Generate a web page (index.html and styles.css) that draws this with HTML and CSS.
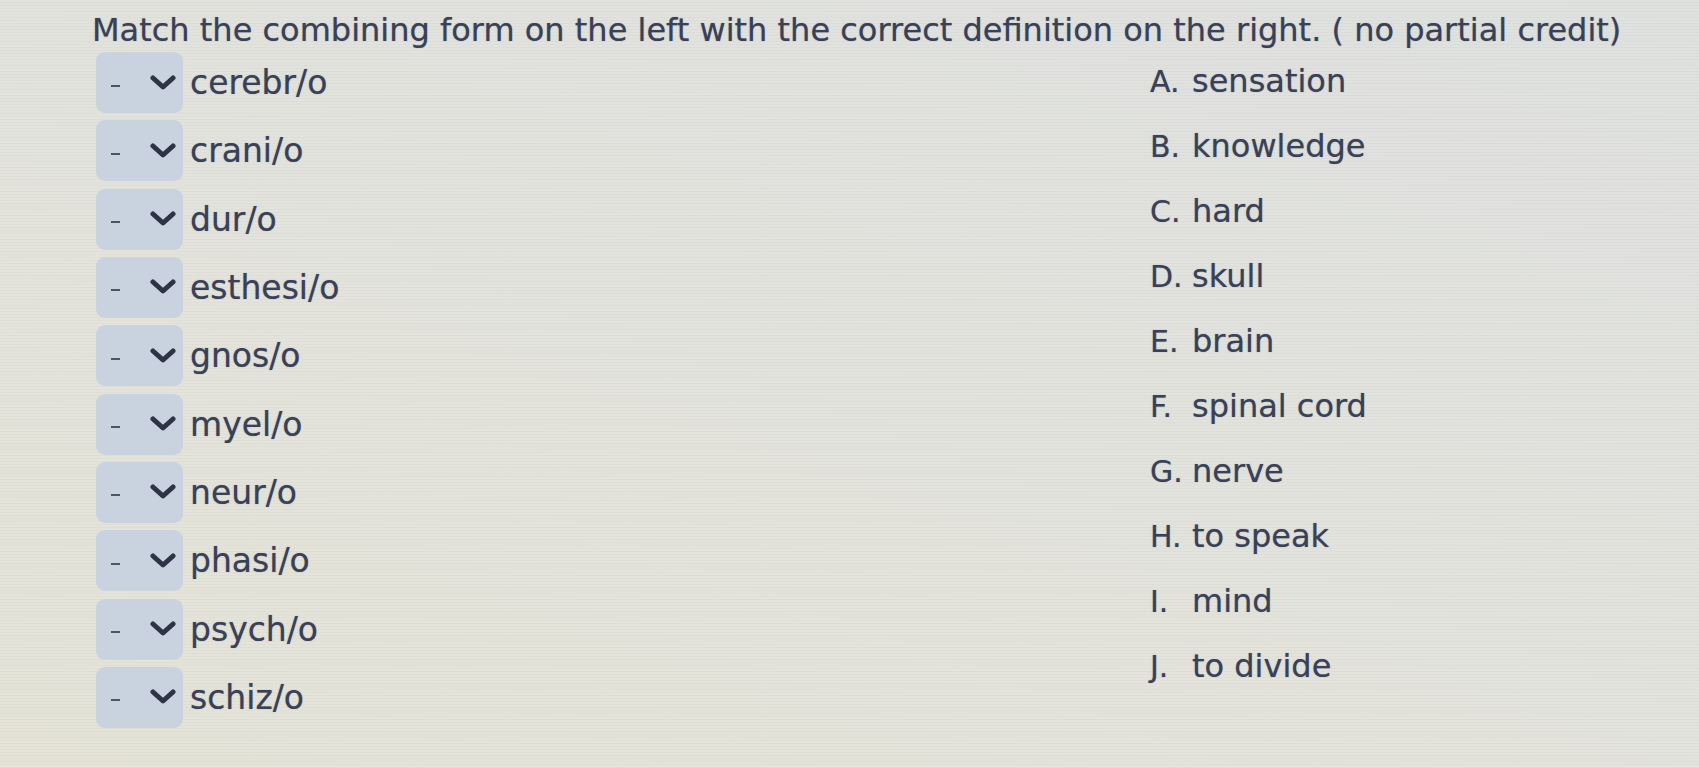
FILE: index.html
```html
<!DOCTYPE html>
<html lang="en">
<head>
<meta charset="UTF-8" />
<meta name="viewport" content="width=device-width, initial-scale=1" />
<title>Matching - Combining Forms</title>
<link rel="stylesheet" href="styles.css">
</head>
<body>
  <div class="question">
    <h1 class="prompt">Match the combining form on the left with the correct definition on the right. ( no partial credit)</h1>

    <div class="match">
      <!-- combining forms, each with its answer picker -->
      <ul class="terms">
        <li class="term"><div class="picker"><span class="dash"></span><svg class="chev" viewBox="0 0 26 16"><polyline points="3,3 13,12 23,3" /></svg></div><span class="word">cerebr/o</span></li>
        <li class="term"><div class="picker"><span class="dash"></span><svg class="chev" viewBox="0 0 26 16"><polyline points="3,3 13,12 23,3" /></svg></div><span class="word">crani/o</span></li>
        <li class="term"><div class="picker"><span class="dash"></span><svg class="chev" viewBox="0 0 26 16"><polyline points="3,3 13,12 23,3" /></svg></div><span class="word">dur/o</span></li>
        <li class="term"><div class="picker"><span class="dash"></span><svg class="chev" viewBox="0 0 26 16"><polyline points="3,3 13,12 23,3" /></svg></div><span class="word">esthesi/o</span></li>
        <li class="term"><div class="picker"><span class="dash"></span><svg class="chev" viewBox="0 0 26 16"><polyline points="3,3 13,12 23,3" /></svg></div><span class="word">gnos/o</span></li>
        <li class="term"><div class="picker"><span class="dash"></span><svg class="chev" viewBox="0 0 26 16"><polyline points="3,3 13,12 23,3" /></svg></div><span class="word">myel/o</span></li>
        <li class="term"><div class="picker"><span class="dash"></span><svg class="chev" viewBox="0 0 26 16"><polyline points="3,3 13,12 23,3" /></svg></div><span class="word">neur/o</span></li>
        <li class="term"><div class="picker"><span class="dash"></span><svg class="chev" viewBox="0 0 26 16"><polyline points="3,3 13,12 23,3" /></svg></div><span class="word">phasi/o</span></li>
        <li class="term"><div class="picker"><span class="dash"></span><svg class="chev" viewBox="0 0 26 16"><polyline points="3,3 13,12 23,3" /></svg></div><span class="word">psych/o</span></li>
        <li class="term"><div class="picker"><span class="dash"></span><svg class="chev" viewBox="0 0 26 16"><polyline points="3,3 13,12 23,3" /></svg></div><span class="word">schiz/o</span></li>
      </ul>

      <!-- definitions -->
      <ol class="defs">
        <li><span class="letter">A.</span>sensation</li>
        <li><span class="letter">B.</span>knowledge</li>
        <li><span class="letter">C.</span>hard</li>
        <li><span class="letter">D.</span>skull</li>
        <li><span class="letter">E.</span>brain</li>
        <li><span class="letter">F.</span>spinal cord</li>
        <li><span class="letter">G.</span>nerve</li>
        <li><span class="letter">H.</span>to speak</li>
        <li><span class="letter">I.</span>mind</li>
        <li><span class="letter">J.</span>to divide</li>
      </ol>
    </div>
  </div>
</body>
</html>
```

FILE: styles.css
```css
* {
  box-sizing: border-box;
}
html, body {
  height: 100%;
}
body {
  margin: 0;
  font-family: 'DejaVu Sans', 'Liberation Sans', sans-serif;
  color: #3a4157;
  text-shadow: 0 0 1px rgba(58, 65, 87, 0.55);
  background:
    repeating-linear-gradient(0deg, rgba(90, 90, 80, 0.035) 0 1px, transparent 1px 3px),
    linear-gradient(20deg, #e5e3d8 0%, #e3e3dd 45%, #dfe1df 100%);
  overflow: hidden;
}
.question {
  padding: 10px 0 0 92px;
}
.prompt {
  margin: 0;
  font-size: 32px;
  font-weight: normal;
  line-height: 40px;
  white-space: nowrap;
}
.match {
  display: grid;
  grid-template-columns: 1058px auto;
  margin-top: 2px;
}
.terms, .defs {
  list-style: none;
  margin: 0;
  padding: 0;
}
.terms {
  padding-left: 4px;
}
.term {
  display: flex;
  align-items: center;
  height: 61px;
  margin-bottom: 7.33px;
}
.picker {
  display: flex;
  align-items: center;
  width: 87px;
  height: 61px;
  padding-left: 15px;
  border-radius: 9px;
  background: #c9d3e0;
}
/* placeholder "-" of the empty select */
.dash {
  width: 9px;
  height: 2px;
  margin-top: 6px;
  margin-right: 30px;
  background: #4e5463;
}
.chev {
  width: 26px;
  height: 16px;
}
.chev polyline {
  fill: none;
  stroke: #2e3345;
  stroke-width: 5;
  stroke-linecap: round;
  stroke-linejoin: round;
}
.word {
  margin-left: 7px;
  font-size: 33px;
}
.defs {
  margin-top: -3px;
}
.defs li {
  height: 65px;
  line-height: 65px;
  font-size: 32px;
  white-space: nowrap;
}
.letter {
  display: inline-block;
  width: 42px;
  font-size: 30px;
}
```
